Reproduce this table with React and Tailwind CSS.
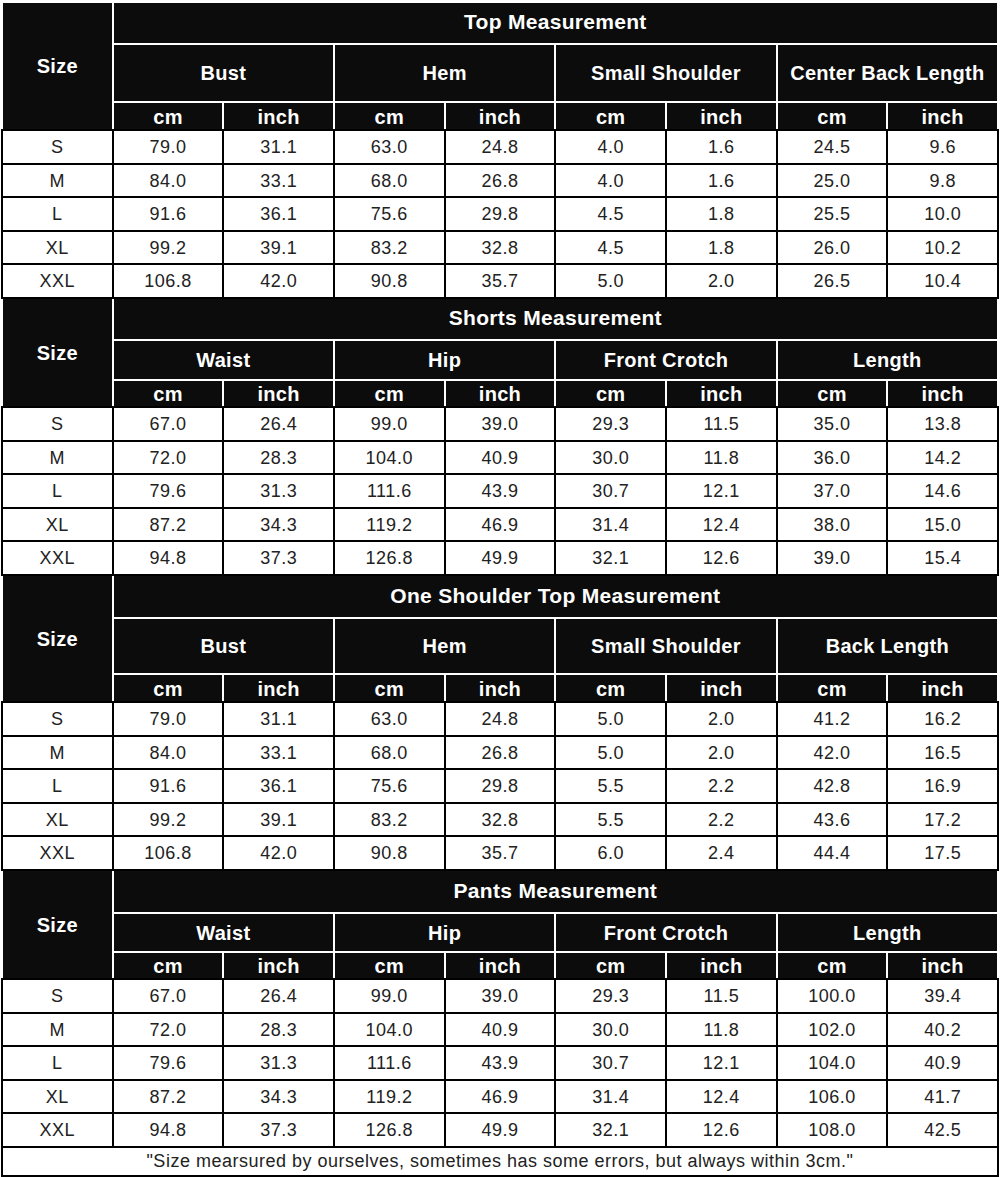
import React from "react";

const sections = [
  {
    title: "Top Measurement",
    subs: ["Bust", "Hem", "Small Shoulder", "Center Back Length"],
    rowsClass: "grid-rows-[40px_56px_26px]",
    rows: [
      ["S", "79.0", "31.1", "63.0", "24.8", "4.0", "1.6", "24.5", "9.6"],
      ["M", "84.0", "33.1", "68.0", "26.8", "4.0", "1.6", "25.0", "9.8"],
      ["L", "91.6", "36.1", "75.6", "29.8", "4.5", "1.8", "25.5", "10.0"],
      ["XL", "99.2", "39.1", "83.2", "32.8", "4.5", "1.8", "26.0", "10.2"],
      ["XXL", "106.8", "42.0", "90.8", "35.7", "5.0", "2.0", "26.5", "10.4"],
    ],
  },
  {
    title: "Shorts Measurement",
    subs: ["Waist", "Hip", "Front Crotch", "Length"],
    rowsClass: "grid-rows-[40px_38px_25px]",
    rows: [
      ["S", "67.0", "26.4", "99.0", "39.0", "29.3", "11.5", "35.0", "13.8"],
      ["M", "72.0", "28.3", "104.0", "40.9", "30.0", "11.8", "36.0", "14.2"],
      ["L", "79.6", "31.3", "111.6", "43.9", "30.7", "12.1", "37.0", "14.6"],
      ["XL", "87.2", "34.3", "119.2", "46.9", "31.4", "12.4", "38.0", "15.0"],
      ["XXL", "94.8", "37.3", "126.8", "49.9", "32.1", "12.6", "39.0", "15.4"],
    ],
  },
  {
    title: "One Shoulder Top Measurement",
    subs: ["Bust", "Hem", "Small Shoulder", "Back Length"],
    rowsClass: "grid-rows-[41px_54px_26px]",
    rows: [
      ["S", "79.0", "31.1", "63.0", "24.8", "5.0", "2.0", "41.2", "16.2"],
      ["M", "84.0", "33.1", "68.0", "26.8", "5.0", "2.0", "42.0", "16.5"],
      ["L", "91.6", "36.1", "75.6", "29.8", "5.5", "2.2", "42.8", "16.9"],
      ["XL", "99.2", "39.1", "83.2", "32.8", "5.5", "2.2", "43.6", "17.2"],
      ["XXL", "106.8", "42.0", "90.8", "35.7", "6.0", "2.4", "44.4", "17.5"],
    ],
  },
  {
    title: "Pants Measurement",
    subs: ["Waist", "Hip", "Front Crotch", "Length"],
    rowsClass: "grid-rows-[41px_37px_25px]",
    rows: [
      ["S", "67.0", "26.4", "99.0", "39.0", "29.3", "11.5", "100.0", "39.4"],
      ["M", "72.0", "28.3", "104.0", "40.9", "30.0", "11.8", "102.0", "40.2"],
      ["L", "79.6", "31.3", "111.6", "43.9", "30.7", "12.1", "104.0", "40.9"],
      ["XL", "87.2", "34.3", "119.2", "46.9", "31.4", "12.4", "106.0", "41.7"],
      ["XXL", "94.8", "37.3", "126.8", "49.9", "32.1", "12.6", "108.0", "42.5"],
    ],
  },
];

const headCell =
  "bg-[#0c0c0c] flex items-center justify-center text-white font-bold text-[20px] tracking-[0.3px] leading-none";

const dataCell =
  "bg-white flex items-center justify-center text-[18px] tracking-[0.5px] text-[#222] leading-none";

function Section({ title, subs, rows, rowsClass }) {
  const units = ["cm", "inch", "cm", "inch", "cm", "inch", "cm", "inch"];
  return (
    <div>
      <div className={"grid grid-cols-9 gap-[2px] bg-white px-[2px] " + rowsClass}>
        <div className={headCell + " row-span-3"}>Size</div>
        <div className={headCell + " col-span-8 text-[21px] pb-[3px]"}>{title}</div>
        {subs.map((s) => (
          <div key={s} className={headCell + " col-span-2"}>
            {s}
          </div>
        ))}
        {units.map((u, i) => (
          <div key={i} className={headCell + " pt-[1px]"}>
            {u}
          </div>
        ))}
      </div>
      <div className="grid grid-cols-9 gap-[2px] bg-black border-2 border-black">
        {rows.map((r, ri) =>
          r.map((c, ci) => (
            <div
              key={ri + "-" + ci}
              className={dataCell + (ri % 2 === 0 ? " h-[32px]" : " h-[31px]")}
            >
              {c}
            </div>
          ))
        )}
      </div>
    </div>
  );
}

export default function App() {
  return (
    <div className="w-[1000px] bg-white pt-[3px] pb-[2px] font-['Liberation_Sans',Arial,sans-serif]">
      <div className="mx-[1px]">
        {sections.map((s) => (
          <Section key={s.title} {...s} />
        ))}
        <div className="h-[29px] border-2 border-t-0 border-black bg-white flex items-center justify-center text-[18px] tracking-[0.5px] text-[#222] leading-none pb-[2px]">
          "Size mearsured by ourselves, sometimes has some errors, but always within 3cm."
        </div>
      </div>
    </div>
  );
}
